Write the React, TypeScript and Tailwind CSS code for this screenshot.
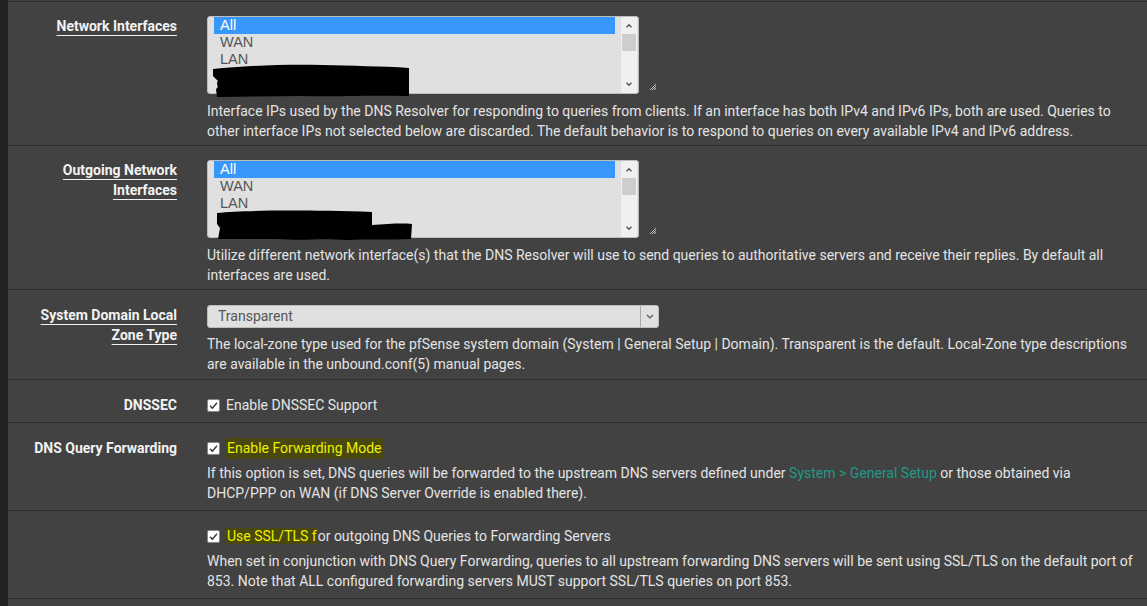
import React from "react"

const font = { fontFamily: "Roboto, 'Liberation Sans', sans-serif" }

function Check() {
  return (
    <span className="inline-flex h-[13px] w-[13px] shrink-0 items-center justify-center rounded-[2px] border border-[#8a8a8a] bg-white">
      <svg viewBox="0 0 12 12" className="h-[11px] w-[11px]">
        <path d="M2.2 6.3 L4.8 8.9 L9.8 3" fill="none" stroke="#333" strokeWidth="1.5" />
      </svg>
    </span>
  )
}

function Label({ children }: { children: React.ReactNode }) {
  return (
    <div className="text-right text-[14px] font-bold leading-5 text-[#f2f2f2]">
      {children}
    </div>
  )
}

function Underlined({ children }: { children: React.ReactNode }) {
  return <span className="underline decoration-1 underline-offset-[4px]">{children}</span>
}

function Help({ children, className = "" }: { children: React.ReactNode; className?: string }) {
  return <p className={`text-[14px] leading-5 text-[#e4e4e4] ${className}`}>{children}</p>
}

function Blob({ variant }: { variant: 1 | 2 }) {
  if (variant === 1) {
    return (
      <svg className="absolute left-[5px] top-[48px] h-[33px] w-[198px]" viewBox="0 0 198 33">
        <path
          d="M1 5 C30 2 70 0 110 1 C140 2 170 2 197 4 L197 32 C150 31 120 33 90 32 L5 33 L4 25 C8 22 3 20 6 17 L1 12 Z"
          fill="#000"
        />
      </svg>
    )
  }
  return (
    <svg className="absolute left-[10px] top-[50px] h-[31px] w-[196px]" viewBox="0 0 196 31">
      <path
        d="M0 3 C30 0 90 0 155 2 L155 15 C170 14 185 13 195 14 L194 29 C170 30 150 29 130 30 C100 28 90 31 60 29 L1 29 L3 18 L0 14 Z"
        fill="#000"
      />
    </svg>
  )
}

function MultiSelect({ blob }: { blob: 1 | 2 }) {
  return (
    <div className="relative h-[78px] w-[432px]">
      <div className="relative flex h-full w-full overflow-hidden rounded-[3px] border border-[#bdbdbd] bg-[#e0e0e0]">
        <div className="flex-1 pl-[6px] pr-[6px]" style={{ fontFamily: "'Liberation Sans', Arial, sans-serif" }}>
          <div className="h-[17px] bg-[#3797fb] pl-[6px] text-[14.5px] leading-[17px] text-white">All</div>
          <div className="h-[17px] pl-[6px] text-[14.5px] leading-[17px] text-[#555]">WAN</div>
          <div className="h-[17px] pl-[6px] text-[14.5px] leading-[17px] text-[#555]">LAN</div>
        </div>
        <div className="flex w-[16px] flex-col bg-[#f0f0f0]">
          <div className="flex h-[17px] items-center justify-center">
            <svg viewBox="0 0 8 6" className="h-[5px] w-[8px]">
              <path d="M1 5 L4 2 L7 5" fill="none" stroke="#505050" strokeWidth="1.6" />
            </svg>
          </div>
          <div className="mx-[1px] h-[17px] bg-[#cdcdcd]" />
          <div className="flex-1" />
          <div className="flex h-[17px] items-center justify-center">
            <svg viewBox="0 0 8 6" className="h-[5px] w-[8px]">
              <path d="M1 1 L4 4 L7 1" fill="none" stroke="#505050" strokeWidth="1.6" />
            </svg>
          </div>
        </div>
        <div className="w-[1px]" />
      </div>
      <Blob variant={blob} />
      <svg className="absolute left-[442px] top-[67px] h-[8px] w-[8px]" viewBox="0 0 8 8">
        <path d="M7 1 L1 7 M7 3 L3 7 M7 5 L5 7" stroke="#bbb" strokeWidth="1" />
      </svg>
    </div>
  )
}

function Row({
  label,
  children,
  className = "",
}: {
  label?: React.ReactNode
  children: React.ReactNode
  className?: string
}) {
  return (
    <div className={`grid grid-cols-[169px_1fr] gap-x-[30px] border-t border-[#2d2d2d] pr-[8px] ${className}`}>
      <Label>{label}</Label>
      <div>{children}</div>
    </div>
  )
}

export default function App() {
  return (
    <div className="flex min-h-screen bg-[#424242]" style={font}>
      <div className="w-[8px] shrink-0 bg-[#232323]" />
      <div className="flex-1 pt-[1px]">
        <Row label={<Underlined>Network Interfaces</Underlined>} className="h-[144px] pt-[14px]">
          <MultiSelect blob={1} />
          <Help className="mt-[7px]">
            Interface IPs used by the DNS Resolver for responding to queries from clients. If an interface has both IPv4 and
            IPv6 IPs, both are used. Queries to other interface IPs not selected below are discarded. The default behavior is
            to respond to queries on every available IPv4 and IPv6 address.
          </Help>
        </Row>

        <Row
          label={
            <>
              <Underlined>Outgoing Network</Underlined>
              <br />
              <Underlined>Interfaces</Underlined>
            </>
          }
          className="h-[144px] pt-[14px]"
        >
          <MultiSelect blob={2} />
          <Help className="mt-[7px]">
            Utilize different network interface(s) that the DNS Resolver will use to send queries to authoritative servers and
            receive their replies. By default all interfaces are used.
          </Help>
        </Row>

        <Row
          label={
            <>
              <Underlined>System Domain Local</Underlined>
              <br />
              <Underlined>Zone Type</Underlined>
            </>
          }
          className="h-[90px] pt-[15px]"
        >
          <div className="flex h-[23px] w-[452px] items-stretch overflow-hidden rounded-[3px] border border-[#bdbdbd] bg-[#e0e0e0]">
            <div className="flex-1 pl-[10px] text-[14px] leading-[21px] text-[#555]">Transparent</div>
            <div className="flex w-[18px] items-center justify-center border-l border-[#a8a8a8]">
              <svg viewBox="0 0 8 5" className="h-[5px] w-[8px]">
                <path d="M1 1 L4 4 L7 1" fill="none" stroke="#555" strokeWidth="1.1" />
              </svg>
            </div>
          </div>
          <Help className="mt-[6px]">
            The local-zone type used for the pfSense system domain (System | General Setup | Domain). Transparent is the
            default. Local-Zone type descriptions are available in the unbound.conf(5) manual pages.
          </Help>
        </Row>

        <Row label="DNSSEC" className="h-[43px] pt-[15px]">
          <div className="flex h-5 items-center gap-[6px] text-[14px] text-[#e4e4e4]">
            <Check />
            <span>Enable DNSSEC Support</span>
          </div>
        </Row>

        <Row label="DNS Query Forwarding" className="h-[88px] pt-[15px]">
          <div className="flex h-5 items-center gap-[6px] text-[14px] text-[#e4e4e4]">
            <Check />
            <span className="bg-[#48480f] px-[1px] text-[#eef000]">Enable Forwarding Mode</span>
          </div>
          <Help className="mt-[5px]">
            If this option is set, DNS queries will be forwarded to the upstream DNS servers defined under{" "}
            <span className="text-[#1f9a86]">System &gt; General Setup</span> or those obtained via DHCP/PPP on WAN (if DNS
            Server Override is enabled there).
          </Help>
        </Row>

        <Row className="h-[88px] pt-[15px]">
          <div className="flex h-5 items-center gap-[6px] text-[14px] text-[#e4e4e4]">
            <Check />
            <span>
              <span className="bg-[#48480f] px-[1px] text-[#eef000]">Use SSL/TLS f</span>or outgoing DNS Queries to Forwarding
              Servers
            </span>
          </div>
          <Help className="mt-[5px]">
            When set in conjunction with DNS Query Forwarding, queries to all upstream forwarding DNS servers will be sent using
            SSL/TLS on the default port of 853. Note that ALL configured forwarding servers MUST support SSL/TLS queries on port
            853.
          </Help>
        </Row>

        <div className="border-t border-[#2d2d2d]" />
      </div>
    </div>
  )
}
